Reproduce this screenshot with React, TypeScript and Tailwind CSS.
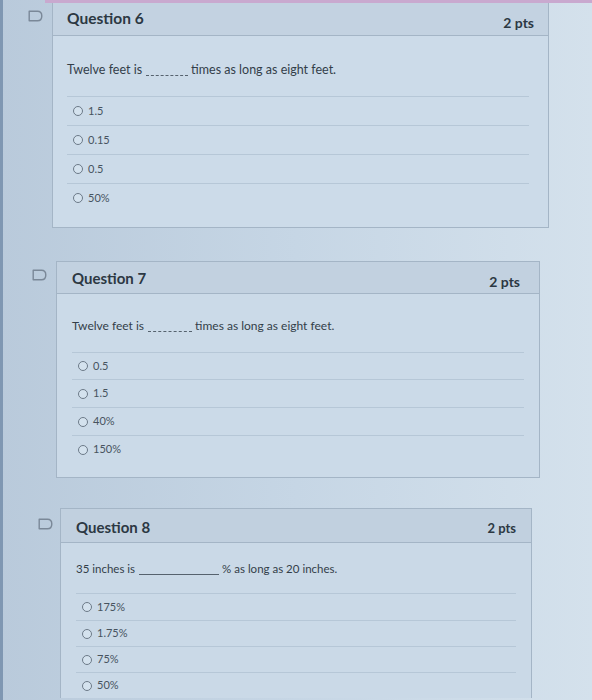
import React from 'react';

const Flag = () => (
  <svg width="15" height="12" viewBox="0 0 15 12" fill="none">
    <path d="M1.2 1.2 H9.5 Q13.8 1.2 13.8 6 Q13.8 10.8 9.5 10.8 H1.2 Z" stroke="#7a8898" strokeWidth="1.4" strokeLinejoin="round" />
  </svg>
);

const Radio = () => (
  <span className="inline-block w-[10px] h-[10px] rounded-full border border-[#6c7a88] bg-[#d4e2ee] shrink-0" />
);

const Option = ({ label, row }: { label: string; row: string }) => (
  <div className={`flex items-center gap-[5px] pl-[6px] border-t border-[#b6c7d7] ${row}`}>
    <Radio />
    <span className="text-[11px] text-[#47535f]">{label}</span>
  </div>
);

const Blank = ({ w, dashed }: { w: string; dashed?: boolean }) => (
  <span className={`inline-block ${w} ml-[4px] mr-[3px] -translate-y-[2px] border-b ${dashed ? 'border-dashed border-[#56626e]' : 'border-[#56626e]'}`} style={{ height: 11 }} />
);

export default function App() {
  return (
    <div className="flex w-[592px] h-[700px] overflow-hidden bg-linear-to-r from-[#b9cadb] via-[#c6d6e5] to-[#d4e1ec] font-['Lato','Open_Sans',sans-serif] text-[#333e49]">
      <div className="w-[3px] shrink-0 bg-[#7f97b2]" />
      <div className="flex-1 flex flex-col">
        {/* pink top strip */}
        <div className="h-[3px] ml-[42px] bg-[#c9a9cf]" />

        {/* Question 6 */}
        <div className="flex items-start">
          <div className="w-[49px] shrink-0 pl-[25px] pt-[7px]"><Flag /></div>
          <div className="w-[497px] border-x border-b border-[#a4b5c6] bg-[#ccdbe9]">
            <div className="h-[33px] flex items-start justify-between px-[14px] bg-[#c3d2e1] border-b border-[#a4b5c6]">
              <span className="pt-[4px] text-[15.5px] font-bold text-[#2c3843]">Question 6</span>
              <span className="pt-[9px] text-[14px] font-bold text-[#2c3843]">2 pts</span>
            </div>
            <div className="px-[14px] pt-[26px] pb-[15px]">
              <div className="text-[12.5px] leading-[16px] flex items-end">
                <span>Twelve feet is</span>
                <Blank w="w-[42px]" dashed />
                <span>times as long as eight feet.</span>
              </div>
              <div className="mt-[18px] mr-[5px]">
                <Option label="1.5" row="h-[29px]" />
                <Option label="0.15" row="h-[29px]" />
                <Option label="0.5" row="h-[29px]" />
                <Option label="50%" row="h-[29px]" />
              </div>
            </div>
          </div>
        </div>

        {/* Question 7 */}
        <div className="flex items-start mt-[33px]">
          <div className="w-[53px] shrink-0 pl-[29px] pt-[8px]"><Flag /></div>
          <div className="w-[484px] border border-[#a4b5c6] bg-[#cbdae8]">
            <div className="h-[32px] flex items-start justify-between px-[15px] bg-[#c2d1e0] border-b border-[#a4b5c6]">
              <span className="pt-[5px] text-[15px] font-bold text-[#2c3843]">Question 7</span>
              <span className="pt-[9px] pr-[4px] text-[14px] font-bold text-[#2c3843]">2 pts</span>
            </div>
            <div className="px-[15px] pt-[24px] pb-[14px]">
              <div className="text-[12px] leading-[16px] flex items-end">
                <span>Twelve feet is</span>
                <Blank w="w-[44px]" dashed />
                <span>times as long as eight feet.</span>
              </div>
              <div className="mt-[18px]">
                <Option label="0.5" row="h-[27px] pl-[5px]" />
                <Option label="1.5" row="h-[28px] pl-[5px]" />
                <Option label="40%" row="h-[28px] pl-[5px]" />
                <Option label="150%" row="h-[28px] pl-[5px]" />
              </div>
            </div>
          </div>
        </div>

        {/* Question 8 */}
        <div className="flex items-start mt-[30px]">
          <div className="w-[57px] shrink-0 pl-[35px] pt-[10px]"><Flag /></div>
          <div className="w-[472px] border-x border-t border-[#a4b5c6] bg-[#cad9e7]">
            <div className="h-[34px] flex items-start justify-between px-[15px] bg-[#c1d0df] border-b border-[#a4b5c6]">
              <span className="pt-[7px] text-[15px] font-bold text-[#2c3843]">Question 8</span>
              <span className="pt-[10px] text-[13px] font-bold text-[#2c3843]">2 pts</span>
            </div>
            <div className="px-[15px] pt-[18px]">
              <div className="text-[11.5px] leading-[16px] flex items-end">
                <span>35 inches is</span>
                <Blank w="w-[80px]" />
                <span>% as long as 20 inches.</span>
              </div>
              <div className="mt-[16px]">
                <Option label="175%" row="h-[27px] pl-[5px]" />
                <Option label="1.75%" row="h-[26px] pl-[5px]" />
                <Option label="75%" row="h-[26px] pl-[5px]" />
                <Option label="50%" row="h-[26px] pl-[5px]" />
              </div>
            </div>
          </div>
        </div>
      </div>
    </div>
  );
}
